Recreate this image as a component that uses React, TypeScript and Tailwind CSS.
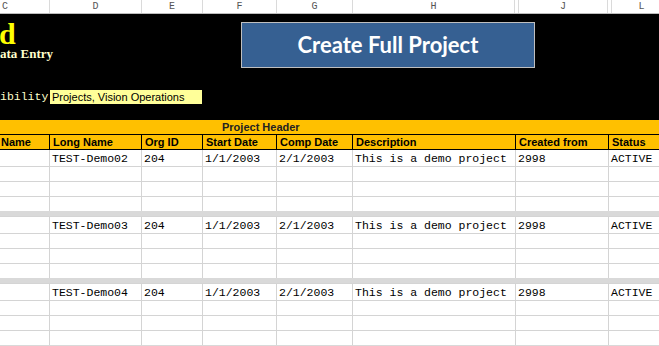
import React from "react";

const mono = "font-['Liberation_Mono','Courier_New',monospace]";
const sans = "font-['Liberation_Sans',Arial,sans-serif]";

const letterCols = [
  { label: "C", w: "w-[50px]", align: "justify-start pl-[2px]" },
  { label: "D", w: "w-[92px]", align: "justify-center" },
  { label: "E", w: "w-[61px]", align: "justify-center" },
  { label: "F", w: "w-[74px]", align: "justify-center" },
  { label: "G", w: "w-[76px]", align: "justify-center" },
  { label: "H", w: "w-[162px]", align: "justify-center" },
  { label: "", w: "w-[4px]", align: "justify-center" },
  { label: "J", w: "w-[89px]", align: "justify-center" },
  { label: "", w: "w-[4px]", align: "justify-center" },
  { label: "L", w: "w-[60px]", align: "justify-center" },
];

const labels = ["Name", "Long Name", "Org ID", "Start Date", "Comp Date", "Description", "Created from", "Status"];

const projects = [
  ["", "TEST-Demo02", "204", "1/1/2003", "2/1/2003", "This is a demo project", "2998", "ACTIVE"],
  ["", "TEST-Demo03", "204", "1/1/2003", "2/1/2003", "This is a demo project", "2998", "ACTIVE"],
  ["", "TEST-Demo04", "204", "1/1/2003", "2/1/2003", "This is a demo project", "2998", "ACTIVE"],
];

const grid = "grid grid-cols-[50px_92px_61px_74px_76px_163px_93px_80px]";

function Row({ cells, tall, last, topLine }: { cells: string[]; tall?: boolean; last?: boolean; topLine?: boolean }) {
  const h = tall ? (topLine ? "h-[18px] border-t" : "h-[17px]") : last ? "h-[14px]" : "h-[15px]";
  return (
    <div className={`${grid} ${h} border-[#d4d4d4] ${last ? "" : "border-b"}`}>
      {cells.map((c, i) => (
        <div
          key={i}
          className={`border-r border-[#d4d4d4] pl-[2px] ${tall ? "pt-[3px]" : ""} text-[11.5px] leading-[12px] text-black whitespace-nowrap ${mono}`}
        >
          {c}
        </div>
      ))}
    </div>
  );
}

export default function App() {
  const empty = labels.map(() => "");
  return (
    <div className="w-[659px] h-[346px] overflow-hidden bg-white">
      {/* column letters */}
      <div className="flex h-[14px] border-b border-[#bdbdbd] bg-white">
        {letterCols.map((c, i) => (
          <div
            key={i}
            className={`${c.w} shrink-0 flex items-center ${c.align} border-r border-[#dadada] text-[10px] leading-none text-[#555] ${mono}`}
          >
            {c.label}
          </div>
        ))}
      </div>

      {/* black banner */}
      <div className="h-[106px] bg-black flex">
        <div className="w-[241px] shrink-0">
          <div className="ml-[-1px] mt-[6px] h-[28px] text-[30px] leading-[28px] font-bold text-[#ffff00] font-['Liberation_Serif','Times_New_Roman',serif]">
            d
          </div>
          <div className="h-[12px] text-[13px] leading-[12px] font-bold text-[#ffffcc] whitespace-nowrap font-['Liberation_Serif','Times_New_Roman',serif]">
            ata Entry
          </div>
          <div className="mt-[30px] flex items-center h-[14px]">
            <span className={`w-[50px] text-[11.5px] leading-[14px] text-[#ffffcc] ${mono}`}>ibility</span>
            <span className={`w-[152px] h-[14px] bg-[#ffff99] pl-[2px] text-[11px] leading-[14px] text-black whitespace-nowrap ${sans}`}>
              Projects, Vision Operations
            </span>
          </div>
        </div>
        <div className="mt-[8px] w-[294px] h-[46px] shrink-0 bg-[#366092] border border-[#bfbfbf] flex items-center justify-center">
          <span className="text-[22px] leading-[26px] font-bold text-white font-['Lato',sans-serif]">Create Full Project</span>
        </div>
      </div>

      {/* project header band */}
      <div className={`h-[14px] bg-[#ffc000] pl-[222px] text-[11px] leading-[14px] font-bold text-[#222] ${sans}`}>
        Project Header
      </div>
      <div className={`${grid} h-[16px] bg-[#ffc000] border-t border-b border-black`}>
        {labels.map((l, i) => (
          <div
            key={i}
            className={`border-r border-black ${i === 0 ? "pl-[1px]" : "pl-[3px]"} text-[11px] leading-[15px] font-bold text-black whitespace-nowrap ${sans}`}
          >
            {l}
          </div>
        ))}
      </div>

      {projects.map((p, k) => (
        <div key={k}>
          <Row cells={p} tall topLine={k > 0} />
          <Row cells={empty} />
          <Row cells={empty} />
          <Row cells={empty} last />
          <div className="h-[5px] bg-[#d9d9d9]" />
        </div>
      ))}
    </div>
  );
}
